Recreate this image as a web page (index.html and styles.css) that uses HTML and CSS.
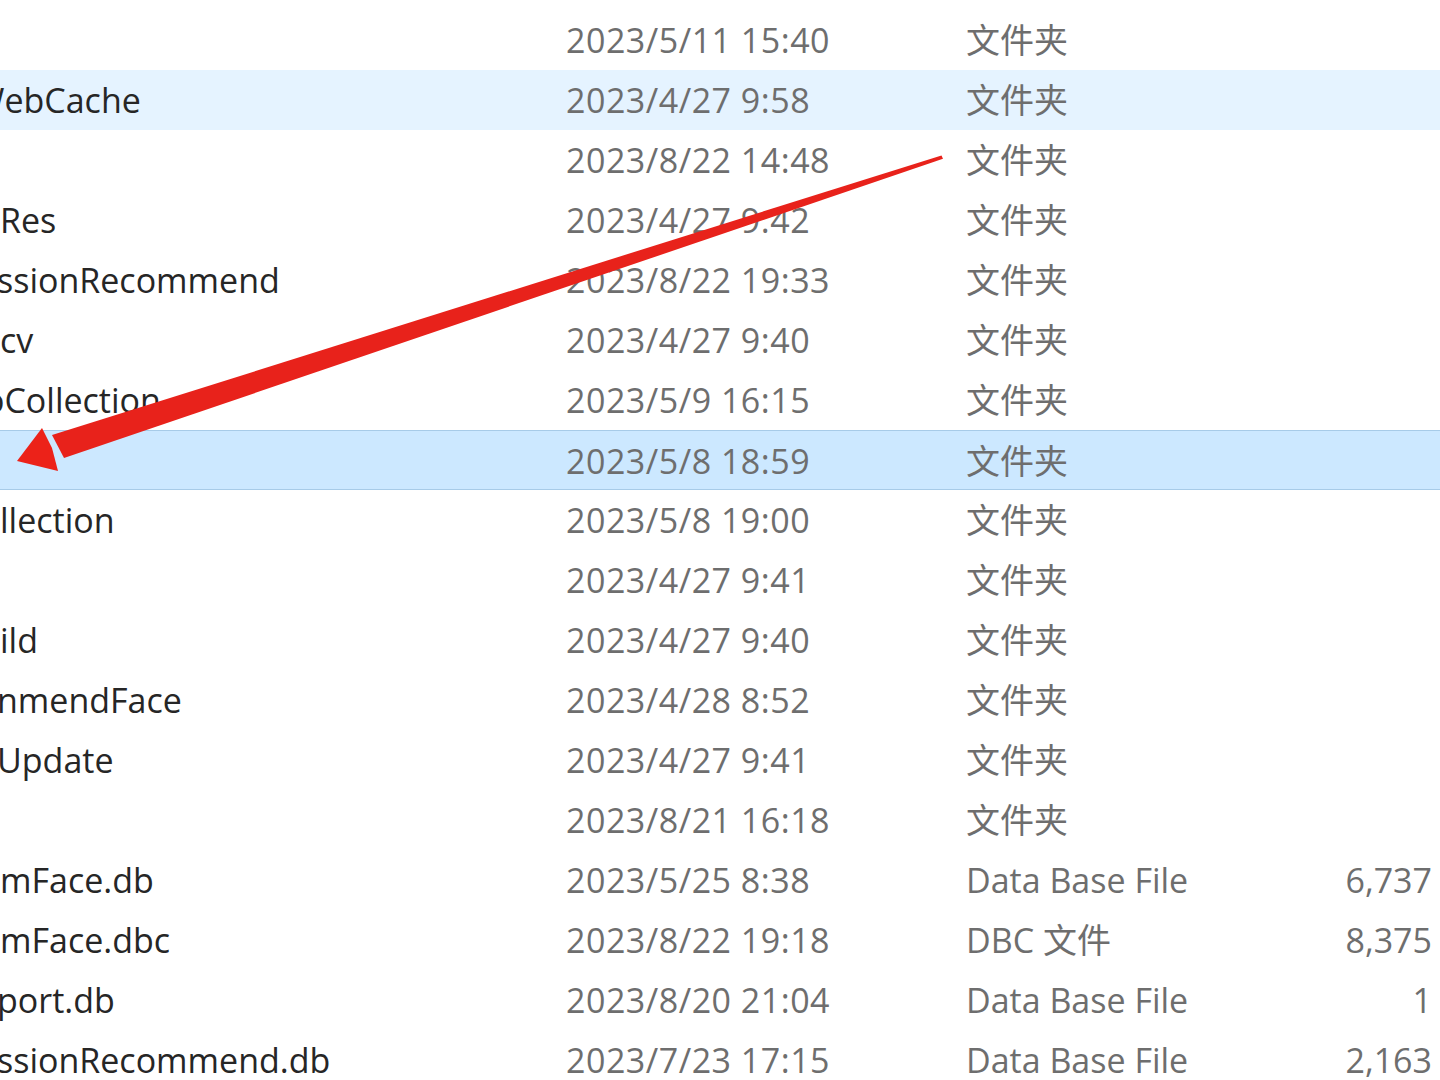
FILE: index.html
```html
<!DOCTYPE html>
<html lang="zh-CN">
<head>
<meta charset="utf-8">
<title>文件列表</title>
<link rel="stylesheet" href="styles.css">
</head>
<body>
<div class="view">
  <div class="list">
    <div class="row"><div class="name"></div><div class="date">2023/5/11 15:40</div><div class="type">文件夹</div><div class="size"></div></div>
    <div class="row hover"><div class="name"><span class="cut-w">WebCache</span></div><div class="date">2023/4/27 9:58</div><div class="type">文件夹</div><div class="size"></div></div>
    <div class="row"><div class="name"></div><div class="date">2023/8/22 14:48</div><div class="type">文件夹</div><div class="size"></div></div>
    <div class="row"><div class="name">Res</div><div class="date">2023/4/27 9:42</div><div class="type">文件夹</div><div class="size"></div></div>
    <div class="row"><div class="name"><span class="cut-s">ssionRecommend</span></div><div class="date">2023/8/22 19:33</div><div class="type">文件夹</div><div class="size"></div></div>
    <div class="row"><div class="name">cv</div><div class="date">2023/4/27 9:40</div><div class="type">文件夹</div><div class="size"></div></div>
    <div class="row"><div class="name"><span class="cut-o">oCollection</span></div><div class="date">2023/5/9 16:15</div><div class="type">文件夹</div><div class="size"></div></div>
    <div class="row selected"><div class="name"></div><div class="date">2023/5/8 18:59</div><div class="type">文件夹</div><div class="size"></div></div>
    <div class="row"><div class="name">llection</div><div class="date">2023/5/8 19:00</div><div class="type">文件夹</div><div class="size"></div></div>
    <div class="row"><div class="name"></div><div class="date">2023/4/27 9:41</div><div class="type">文件夹</div><div class="size"></div></div>
    <div class="row"><div class="name">ild</div><div class="date">2023/4/27 9:40</div><div class="type">文件夹</div><div class="size"></div></div>
    <div class="row"><div class="name"><span class="cut-s">nmendFace</span></div><div class="date">2023/4/28 8:52</div><div class="type">文件夹</div><div class="size"></div></div>
    <div class="row"><div class="name"><span class="cut-s">Update</span></div><div class="date">2023/4/27 9:41</div><div class="type">文件夹</div><div class="size"></div></div>
    <div class="row"><div class="name"></div><div class="date">2023/8/21 16:18</div><div class="type">文件夹</div><div class="size"></div></div>
    <div class="row"><div class="name">mFace.db</div><div class="date">2023/5/25 8:38</div><div class="type">Data Base File</div><div class="size">6,737</div></div>
    <div class="row"><div class="name">mFace.dbc</div><div class="date">2023/8/22 19:18</div><div class="type">DBC 文件</div><div class="size">8,375</div></div>
    <div class="row"><div class="name"><span class="cut-s">port.db</span></div><div class="date">2023/8/20 21:04</div><div class="type">Data Base File</div><div class="size">1</div></div>
    <div class="row"><div class="name"><span class="cut-s">ssionRecommend.db</span></div><div class="date">2023/7/23 17:15</div><div class="type">Data Base File</div><div class="size">2,163</div></div>
  </div>
  <svg class="arrow" width="1440" height="1080" viewBox="0 0 1440 1080" aria-hidden="true">
    <polygon points="941.5,155.4 943,158.8 64,458 52,435" fill="#e8221b"/>
    <polygon points="17,461 42,428 52,448 58,471" fill="#ec2219"/>
  </svg>
</div>
</body>
</html>
```

FILE: styles.css
```css
html, body {
  margin: 0;
  padding: 0;
  background: #ffffff;
}
body {
  width: 1440px;
  height: 1080px;
  overflow: hidden;
  font-family: "Open Sans", "Noto Sans", "Noto Sans CJK SC", sans-serif;
  font-size: 34px;
}
.view {
  position: relative;
  width: 1440px;
  height: 1080px;
  overflow: hidden;
}
.list {
  display: flex;
  flex-direction: column;
  padding-top: 10px;
}
.row {
  display: grid;
  grid-template-columns: 566px 400px 1fr 160px;
  align-items: center;
  height: 60px;
  box-sizing: border-box;
  line-height: 60px;
  white-space: nowrap;
}
.row.hover {
  background: #e5f3ff;
}
.row.selected {
  background: #cce8ff;
  border-top: 1px solid #a7cbe8;
  border-bottom: 1px solid #a7cbe8;
}
.name {
  color: #262626;
  font-weight: 500;
  overflow: hidden;
}
.cut-w {
  display: inline-block;
  margin-left: -27px;
}
.cut-s {
  display: inline-block;
  margin-left: -3px;
}
.cut-o {
  display: inline-block;
  margin-left: -16px;
}
.date, .type, .size {
  color: #6e6e6e;
}
.date {
  letter-spacing: 0.5px;
}
.size {
  text-align: right;
  padding-right: 8px;
}
.arrow {
  position: absolute;
  left: 0;
  top: 0;
  pointer-events: none;
}
```
